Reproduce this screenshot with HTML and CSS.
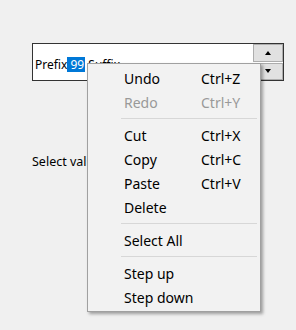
FILE: index.html
```html
<!DOCTYPE html>
<html>
<head>
<meta charset="utf-8">
<link rel="stylesheet" href="styles.css">
</head>
<body>
<div class="page">
  <div class="spinbox">
    <div class="field"><span>Prefix</span><span class="sel"> 99</span><span> Suffix</span></div>
    <div class="spin">
      <div class="btn"><span class="tri up"></span></div>
      <div class="btn"><span class="tri down"></span></div>
    </div>
  </div>
  <div class="label">Select value:</div>
</div>
<div class="menu">
  <div class="item"><span class="name">Undo</span><span class="key">Ctrl+Z</span></div>
  <div class="item disabled"><span class="name">Redo</span><span class="key">Ctrl+Y</span></div>
  <div class="sep"></div>
  <div class="item"><span class="name">Cut</span><span class="key">Ctrl+X</span></div>
  <div class="item"><span class="name">Copy</span><span class="key">Ctrl+C</span></div>
  <div class="item"><span class="name">Paste</span><span class="key">Ctrl+V</span></div>
  <div class="item"><span class="name">Delete</span><span class="key"></span></div>
  <div class="sep"></div>
  <div class="item"><span class="name">Select All</span><span class="key"></span></div>
  <div class="sep"></div>
  <div class="item"><span class="name">Step up</span><span class="key"></span></div>
  <div class="item"><span class="name">Step down</span><span class="key"></span></div>
</div>
</body>
</html>
```
FILE: styles.css
```css
html, body {
  margin: 0;
  padding: 0;
  background: #f0f0f0;
  width: 296px;
  height: 330px;
  overflow: hidden;
  font-family: "Noto Sans", "DejaVu Sans", sans-serif;
  color: #000;
}
.page {
  padding: 43px 0 0 32px;
}
.spinbox {
  box-sizing: border-box;
  width: 252px;
  height: 38px;
  border: 1px solid #333;
  background: #fff;
  display: flex;
}
.field {
  flex: 1;
  display: flex;
  align-items: center;
  padding: 4px 0 0 2px;
  font-size: 12px;
  white-space: pre;
}
.sel {
  background: #0078d7;
  color: #fff;
  padding: 0 1px 0 0;
  line-height: 15px;
}
.spin {
  width: 30px;
  display: flex;
  flex-direction: column;
  gap: 1px;
}
.btn {
  flex: 1;
  background: #e1e1e1;
  border: 1px solid #adadad;
  display: flex;
  align-items: center;
  justify-content: center;
}
.tri {
  width: 0;
  height: 0;
  border-left: 3.5px solid transparent;
  border-right: 3.5px solid transparent;
}
.tri.up { border-bottom: 4px solid #000; }
.tri.down { border-top: 4px solid #000; }
.label {
  margin-top: 73px;
  font-size: 12.5px;
  line-height: 16px;
}
.menu {
  position: absolute;
  left: 87px;
  top: 63px;
  width: 174px;
  box-sizing: border-box;
  background: #f2f2f2;
  border: 1px solid #a0a0a0;
  padding: 2px;
  box-shadow: 2px 2px 3px rgba(0, 0, 0, 0.35);
  font-size: 14px;
}
.item {
  height: 24px;
  display: flex;
  align-items: center;
  padding-left: 34px;
}
.name { width: 77px; }
.item.disabled { color: #999; }
.sep {
  height: 1px;
  background: #d7d7d7;
  margin: 4px 1px 4px 31px;
}
```
